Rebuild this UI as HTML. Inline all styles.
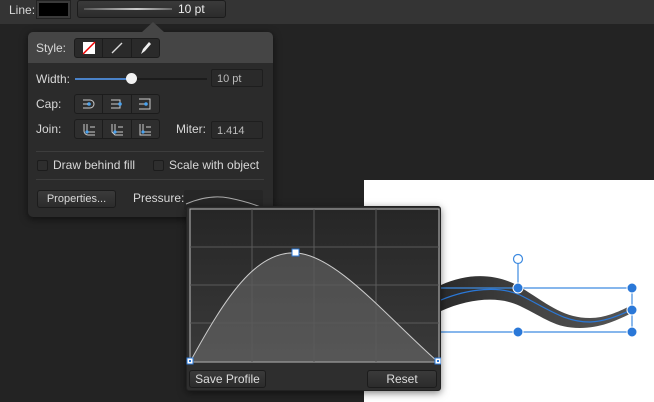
<!DOCTYPE html>
<html><head><style>
*{margin:0;padding:0;box-sizing:border-box}
body{width:654px;height:402px;overflow:hidden;background:#232323;font-family:"Liberation Sans",sans-serif;font-size:12px;color:#d8d8d8;position:relative}
.a{position:absolute}
.btn{position:absolute;background:linear-gradient(#3a3a3a,#2c2c2c);border:1px solid #1c1c1c;border-radius:3px}
.field{position:absolute;background:#2a2a2a;border:1px solid #1e1e1e;border-radius:2px;color:#bbb;font-size:11px;padding:3px 5px}
.seg{position:absolute;background:#2e2e2e;border:1px solid #1c1c1c;border-radius:3px;display:flex}
.seg div{flex:1;border-right:1px solid #1c1c1c;display:flex;align-items:center;justify-content:center}
.seg div:last-child{border-right:none}
.cb{position:absolute;width:11px;height:11px;border:1px solid #1c1c1c;background:#2e2e2e;border-radius:2px}
</style></head><body>
<div class="a" style="left:0;top:0;width:654px;height:24px;background:#343434"></div>
<div class="a" style="left:9px;top:3px">Line:</div>
<div class="a" style="left:37px;top:1px;width:33px;height:17px;background:#000;border:2px solid #3a3a3a;outline:1px solid #222"></div>
<div class="btn" style="left:77px;top:0;width:149px;height:18px"></div>
<div class="a" style="left:84px;top:8px;width:88px;height:2px;background:linear-gradient(90deg,#555,#ccc 60%,#666)"></div>
<div class="a" style="left:178px;top:2px;color:#eee">10 pt</div>
<div class="a" style="left:28px;top:32px;width:245px;height:185px;background:#2b2b2b;border-radius:5px;box-shadow:0 2px 8px rgba(0,0,0,.6)"></div>
<div class="a" style="left:28px;top:32px;width:245px;height:31px;background:#454545;border-radius:5px 5px 0 0"></div>
<div class="a" style="left:142px;top:22px;width:0;height:0;border-left:11px solid transparent;border-right:11px solid transparent;border-bottom:10px solid #454545"></div>
<div class="a" style="left:36px;top:41px">Style:</div>
<div class="seg" style="left:74px;top:38px;width:86px;height:20px;background:#2a2a2a">
 <div><svg width="14" height="14"><rect x="1" y="1" width="12" height="12" fill="#fff"/><line x1="1" y1="13" x2="13" y2="1" stroke="#e00" stroke-width="1.5"/></svg></div>
 <div><svg width="14" height="14"><line x1="2" y1="12" x2="12" y2="2" stroke="#ddd" stroke-width="1.3"/></svg></div>
 <div><svg width="14" height="14"><path d="M3 13 L5 8 L11 1 L13 3 L7 10 Z" fill="#eee"/></svg></div>
</div>
<div class="a" style="left:36px;top:72px">Width:</div>
<div class="a" style="left:75px;top:78px;width:57px;height:2px;background:#4a82c8"></div>
<div class="a" style="left:132px;top:78px;width:75px;height:2px;background:#1c1c1c"></div>
<div class="a" style="left:126px;top:73px;width:11px;height:11px;border-radius:50%;background:#f2f2f2"></div>
<div class="field" style="left:211px;top:69px;width:52px;height:18px">10 pt</div>
<div class="a" style="left:36px;top:97px">Cap:</div>
<div class="seg" style="left:74px;top:94px;width:86px;height:20px">
 <div><svg width="14" height="12"><path d="M1 2H8A4 4 0 0 1 8 10H1" fill="none" stroke="#ccc"/><circle cx="7" cy="6" r="1.8" fill="#4aa3f0"/><line x1="1" y1="6" x2="6" y2="6" stroke="#ccc"/></svg></div>
 <div><svg width="14" height="12"><path d="M1 2H10V10H1" fill="none" stroke="#ccc"/><line x1="1" y1="6" x2="10" y2="6" stroke="#ccc"/><circle cx="10" cy="6" r="1.8" fill="#4aa3f0"/></svg></div>
 <div><svg width="14" height="12"><path d="M1 1H12V11H1" fill="none" stroke="#ccc"/><line x1="1" y1="6" x2="8" y2="6" stroke="#ccc"/><circle cx="8" cy="6" r="1.8" fill="#4aa3f0"/></svg></div>
</div>
<div class="a" style="left:36px;top:122px">Join:</div>
<div class="seg" style="left:74px;top:119px;width:86px;height:20px">
 <div><svg width="14" height="13"><path d="M2 1V8A4 4 0 0 0 6 12H13M5 1V9H13M8 4H13" fill="none" stroke="#ccc"/><circle cx="5" cy="9" r="1.6" fill="#4aa3f0"/></svg></div>
 <div><svg width="14" height="13"><path d="M2 1V9L5 12H13M5 1V9H13M8 4H13" fill="none" stroke="#ccc"/><circle cx="5" cy="9" r="1.6" fill="#4aa3f0"/></svg></div>
 <div><svg width="14" height="13"><path d="M2 1V12H13M5 1V9H13M8 4H13" fill="none" stroke="#ccc"/><circle cx="5" cy="9" r="1.6" fill="#4aa3f0"/></svg></div>
</div>
<div class="a" style="left:176px;top:122px">Miter:</div>
<div class="field" style="left:211px;top:121px;width:52px;height:18px">1.414</div>
<div class="a" style="left:36px;top:151px;width:228px;height:1px;background:#3d3d3d"></div>
<div class="cb" style="left:37px;top:160px"></div>
<div class="a" style="left:53px;top:158px">Draw behind fill</div>
<div class="cb" style="left:153px;top:160px"></div>
<div class="a" style="left:169px;top:158px">Scale with object</div>
<div class="a" style="left:36px;top:179px;width:228px;height:1px;background:#3d3d3d"></div>
<div class="btn" style="left:37px;top:190px;width:79px;height:18px;text-align:center;line-height:16px;font-size:11px">Properties...</div>
<div class="a" style="left:133px;top:191px">Pressure:</div>
<div class="a" style="left:184px;top:190px;width:79px;height:20px;background:#262626;border-radius:2px;overflow:hidden"><svg width="79" height="20"><path d="M2 14 Q25 4 45 8 T79 18" fill="none" stroke="#aaa"/></svg></div>
<div class="a" style="left:364px;top:180px;width:290px;height:222px;background:#fff"></div>
<svg class="a" style="left:0;top:0" width="654" height="402">
 <defs><linearGradient id="g" x1="0" x2="1"><stop offset="0" stop-color="#2a2a2a"/><stop offset=".5" stop-color="#444"/><stop offset="1" stop-color="#555"/></linearGradient></defs>
 <path d="M441 285 C470 272 500 273 525 290 C550 306 565 318 590 318 C605 318 618 312 630 306 L630 314 C615 321 600 328 580 328 C555 328 545 318 520 306 C500 296 470 298 441 311 Z" fill="url(#g)"/>
 <path d="M441 300 C470 288 500 286 520 295 C550 310 565 322 590 322 C610 321 625 312 632 310" fill="none" stroke="#2a78d8" stroke-width="1.2"/>
 <g stroke="#3d8ae0" stroke-width="1.2" fill="none"><line x1="441" y1="288" x2="632" y2="288"/><line x1="441" y1="332" x2="632" y2="332"/><line x1="632" y1="288" x2="632" y2="332"/><line x1="518" y1="263" x2="518" y2="288"/></g>
 <circle cx="518" cy="259" r="4.5" fill="#fff" stroke="#3d8ae0" stroke-width="1.2"/>
 <g fill="#2a78d8" stroke="#fff" stroke-width="1"><circle cx="518" cy="288" r="5"/><circle cx="632" cy="288" r="5"/><circle cx="632" cy="310" r="5"/><circle cx="518" cy="332" r="5"/><circle cx="632" cy="332" r="5"/></g>
</svg>
<div class="a" style="left:186px;top:206px;width:255px;height:185px;background:#2e2e2e;border:1px solid #222;border-radius:3px;box-shadow:0 2px 8px rgba(0,0,0,.5)"></div>
<svg class="a" style="left:186px;top:206px" width="255" height="165">
 <defs><linearGradient id="bg" x1="0" y1="0" x2="0" y2="1"><stop offset="0" stop-color="#262626"/><stop offset="1" stop-color="#3a3a3a"/></linearGradient></defs>
 <rect x="4" y="3" width="249" height="153" fill="url(#bg)" stroke="#bbb"/>
 <path d="M4 156 C40 90 70 45 110 47 C150 49 200 110 252 156 Z" fill="rgba(140,140,140,.35)"/>
 <g stroke="#5a5a5a"><line x1="66" y1="3" x2="66" y2="156"/><line x1="128" y1="3" x2="128" y2="156"/><line x1="190" y1="3" x2="190" y2="156"/><line x1="4" y1="41" x2="253" y2="41"/><line x1="4" y1="79" x2="253" y2="79"/><line x1="4" y1="117" x2="253" y2="117"/></g>
 <path d="M4 156 C40 90 70 45 110 47 C150 49 200 110 252 156" fill="none" stroke="#ccc"/>
 <rect x="106" y="43" width="7" height="7" fill="#fff" stroke="#2a78d8"/>
 <rect x="1" y="152" width="6" height="6" fill="#fff" stroke="#2a78d8"/><rect x="3" y="154" width="2" height="2" fill="#2a78d8"/>
 <rect x="249" y="152" width="6" height="6" fill="#fff" stroke="#2a78d8"/><rect x="251" y="154" width="2" height="2" fill="#2a78d8"/>
</svg>
<div class="btn" style="left:189px;top:370px;width:77px;height:18px;text-align:center;line-height:16px;color:#ddd">Save Profile</div>
<div class="btn" style="left:367px;top:370px;width:70px;height:18px;text-align:center;line-height:16px;color:#ddd">Reset</div>
</body></html>
